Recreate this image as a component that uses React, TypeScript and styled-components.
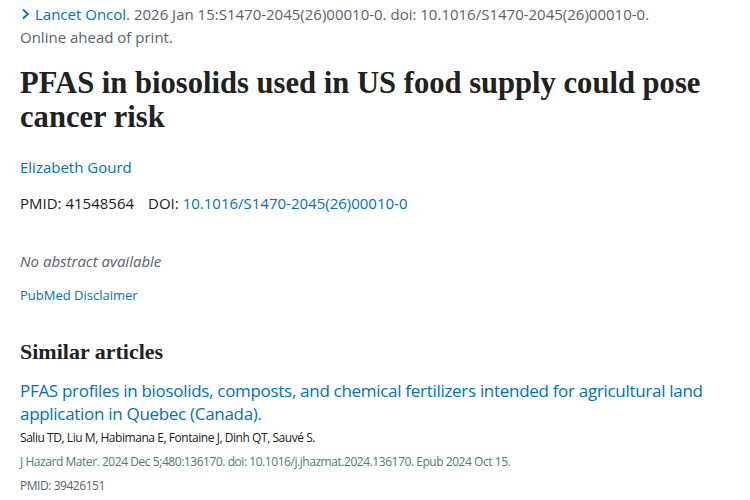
import styled, { createGlobalStyle } from "styled-components";

const colors = {
  text: "#212121",
  gray: "#5b616b",
  link: "#0071bc",
  journal: "#527a6c",
};

const GlobalStyle = createGlobalStyle`
  html, body {
    margin: 0;
    padding: 0;
    background: #ffffff;
  }
  body {
    font-family: "Open Sans", "Noto Sans", sans-serif;
    color: ${colors.text};
  }
`;

const Page = styled.main`
  padding: 3px 20px 0 20px;
  width: 750px;
  box-sizing: border-box;
`;

const Citation = styled.div`
  font-size: 15px;
  line-height: 23px;
  color: ${colors.gray};
`;

const Link = styled.a`
  color: ${colors.link};
  text-decoration: none;
`;

const Chevron = styled.span`
  display: inline-block;
  width: 14px;
  margin-left: 1px;
  color: ${colors.link};
`;

const Title = styled.h1`
  font-family: "Liberation Serif", "DejaVu Serif", serif;
  font-weight: bold;
  font-size: 30.6px;
  line-height: 34px;
  margin: 17px 0 0 0;
  color: ${colors.text};
`;

const Authors = styled.div`
  font-size: 15px;
  margin-top: 23px;
`;

const Identifiers = styled.div`
  font-size: 15px;
  margin-top: 16px;
  display: flex;
  gap: 14px;
`;

const Label = styled.span`
  color: ${colors.text};
`;

const NoAbstract = styled.p`
  font-style: italic;
  font-size: 15px;
  color: ${colors.gray};
  margin: 38px 0 0 0;
`;

const Disclaimer = styled.div`
  font-size: 13px;
  margin-top: 15px;
`;

const SectionTitle = styled.h2`
  font-family: "Liberation Serif", "DejaVu Serif", serif;
  font-weight: bold;
  font-size: 22px;
  margin: 35px 0 0 0;
`;

const Article = styled.div`
  margin-top: 14px;
`;

const ArticleTitle = styled.a`
  display: block;
  color: ${colors.link};
  text-decoration: none;
  font-size: 17px;
  line-height: 23px;
  letter-spacing: -0.3px;
  margin-bottom: 1px;
`;

const Meta = styled.div<{ tone?: string }>`
  font-size: 12px;
  line-height: 24px;
  letter-spacing: -0.45px;
  color: ${(p) => p.tone || colors.text};
`;

const App = () => {
  return (
    <>
      <GlobalStyle />
      <Page>
        <Citation>
          <Chevron>
            <svg width="10" height="12" viewBox="0 0 10 12">
              <path d="M2 1.5 L7 6 L2 10.5" fill="none" stroke={colors.link} strokeWidth="1.8" />
            </svg>
          </Chevron>
          <Link href="#">Lancet Oncol</Link>. 2026 Jan 15:S1470-2045(26)00010-0. doi:
          10.1016/S1470-2045(26)00010-0.
          <br />
          Online ahead of print.
        </Citation>

        <Title>PFAS in biosolids used in US food supply could pose cancer risk</Title>

        <Authors>
          <Link href="#">Elizabeth Gourd</Link>
        </Authors>

        <Identifiers>
          <span>
            <Label>PMID: </Label>41548564
          </span>
          <span>
            <Label>DOI: </Label>
            <Link href="#">10.1016/S1470-2045(26)00010-0</Link>
          </span>
        </Identifiers>

        <NoAbstract>No abstract available</NoAbstract>

        <Disclaimer>
          <Link href="#">PubMed Disclaimer</Link>
        </Disclaimer>

        <SectionTitle>Similar articles</SectionTitle>

        <Article>
          <ArticleTitle href="#">
            PFAS profiles in biosolids, composts, and chemical fertilizers intended for agricultural land
            application in Quebec (Canada).
          </ArticleTitle>
          <Meta>Saliu TD, Liu M, Habimana E, Fontaine J, Dinh QT, Sauvé S.</Meta>
          <Meta tone={colors.journal}>
            J Hazard Mater. 2024 Dec 5;480:136170. doi: 10.1016/j.jhazmat.2024.136170. Epub 2024 Oct 15.
          </Meta>
          <Meta tone={colors.gray}>PMID: 39426151</Meta>
        </Article>
      </Page>
    </>
  );
};

export default App;
